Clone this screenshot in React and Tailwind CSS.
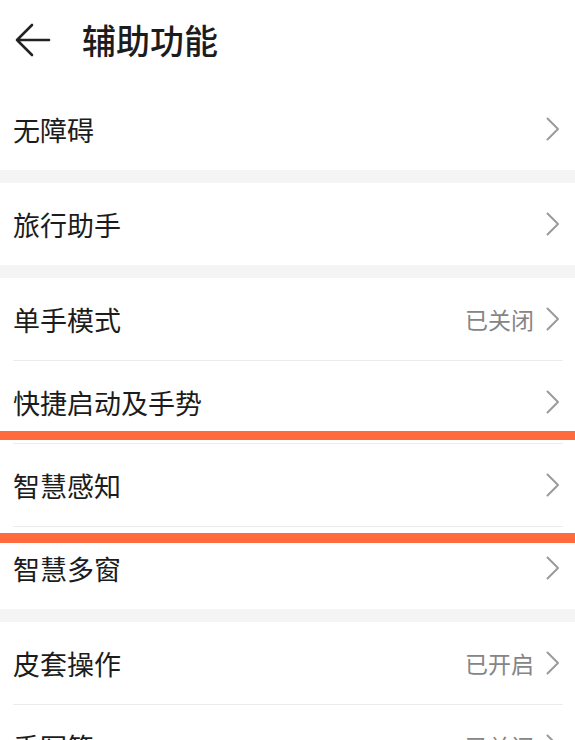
import React from "react";

const font = { fontFamily: '"Noto Sans CJK SC", "Noto Sans", sans-serif' };

function Chevron() {
  return (
    <svg width="14" height="24" viewBox="0 0 14 24" fill="none" className="shrink-0">
      <polyline points="1.5,1.5 12,12 1.5,22.5" stroke="#9b9b9b" strokeWidth="2" strokeLinecap="round" strokeLinejoin="round" />
    </svg>
  );
}

function Row({ label, status }) {
  return (
    <div className="h-[82px] flex items-center pl-[13px] pr-[15px] bg-white">
      <span className="flex-1 text-[27px] text-[#1c1c1c] leading-none">{label}</span>
      {status && <span className="text-[23px] text-[#858585] leading-none mr-[12px]">{status}</span>}
      <Chevron />
    </div>
  );
}

function Divider() {
  return (
    <div className="bg-white px-[13px]">
      <div className="h-px bg-[#ececec] w-[550px]" />
    </div>
  );
}

function Gap() {
  return <div className="h-[13px] bg-[#f4f4f4]" />;
}

export default function App() {
  return (
    <div className="relative w-[575px] h-[740px] overflow-hidden bg-white" style={font}>
      <div className="h-[88px] pb-[8px] flex items-center bg-white">
        <svg width="36" height="36" viewBox="0 0 36 36" fill="none" className="ml-[15px]">
          <path d="M34 18H2M17 3L2 18l15 15" stroke="#222" strokeWidth="2.6" strokeLinecap="round" strokeLinejoin="round" />
        </svg>
        <span className="ml-[31px] text-[34px] font-medium text-[#1c1c1c] leading-none">辅助功能</span>
      </div>
      <Row label="无障碍" />
      <Gap />
      <Row label="旅行助手" />
      <Gap />
      <Row label="单手模式" status="已关闭" />
      <Divider />
      <Row label="快捷启动及手势" />
      <Divider />
      <Row label="智慧感知" />
      <Divider />
      <Row label="智慧多窗" />
      <Gap />
      <Row label="皮套操作" status="已开启" />
      <Divider />
      <Row label="手写笔" status="已关闭" />

      <div className="absolute left-0 right-0 top-[431px] h-[9px] bg-[#ff6b3d]" />
      <div className="absolute left-0 right-0 top-[533px] h-[10px] bg-[#ff6b3d]" />
    </div>
  );
}
